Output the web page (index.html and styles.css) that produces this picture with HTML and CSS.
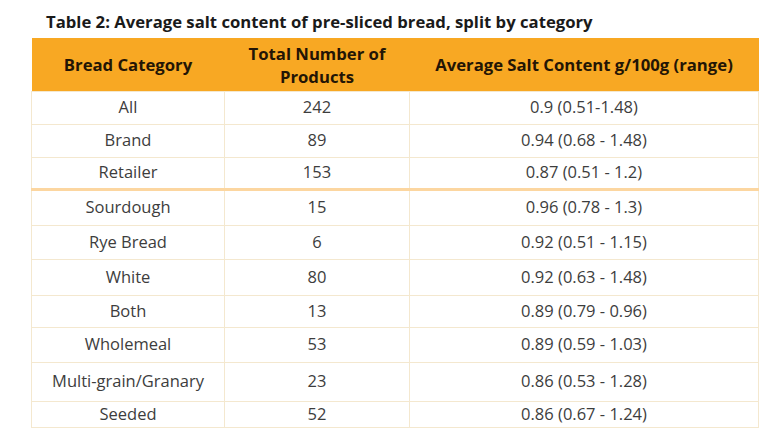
FILE: index.html
```html
<!DOCTYPE html>
<html>
<head>
<meta charset="utf-8">
<link rel="stylesheet" href="styles.css">
</head>
<body>
<div class="page">
  <h1 class="title">Table 2: Average salt content of pre-sliced bread, split by category</h1>
  <table class="salt">
    <colgroup>
      <col class="c1"><col class="c2"><col class="c3">
    </colgroup>
    <thead>
      <tr>
        <th>Bread Category</th>
        <th>Total Number of<br>Products</th>
        <th>Average Salt Content g/100g (range)</th>
      </tr>
    </thead>
    <tbody>
      <tr class="r1"><td>All</td><td>242</td><td>0.9 (0.51-1.48)</td></tr>
      <tr class="r2"><td>Brand</td><td>89</td><td>0.94 (0.68 - 1.48)</td></tr>
      <tr class="r3 split"><td>Retailer</td><td>153</td><td>0.87 (0.51 - 1.2)</td></tr>
      <tr class="r4"><td>Sourdough</td><td>15</td><td>0.96 (0.78 - 1.3)</td></tr>
      <tr class="r5"><td>Rye Bread</td><td>6</td><td>0.92 (0.51 - 1.15)</td></tr>
      <tr class="r6"><td>White</td><td>80</td><td>0.92 (0.63 - 1.48)</td></tr>
      <tr class="r7"><td>Both</td><td>13</td><td>0.89 (0.79 - 0.96)</td></tr>
      <tr class="r8"><td>Wholemeal</td><td>53</td><td>0.89 (0.59 - 1.03)</td></tr>
      <tr class="r9"><td>Multi-grain/Granary</td><td>23</td><td>0.86 (0.53 - 1.28)</td></tr>
      <tr class="r10"><td>Seeded</td><td>52</td><td>0.86 (0.67 - 1.24)</td></tr>
    </tbody>
  </table>
</div>
</body>
</html>
```
FILE: styles.css
```css
html, body {
  margin: 0;
  padding: 0;
  background: #ffffff;
}
.page {
  width: 780px;
  height: 438px;
  padding: 11px 0 0 31px;
  box-sizing: border-box;
  font-family: "Open Sans", "Noto Sans", sans-serif;
}
.title {
  margin: 0 0 5px 15px;
  font-size: 16.7px;
  font-weight: 700;
  line-height: 22px;
  color: #1a1a1a;
  letter-spacing: 0;
}
.salt {
  border-collapse: collapse;
  table-layout: fixed;
  width: 727px;
}
.c1 { width: 193px; }
.c2 { width: 185px; }
.c3 { width: 349px; }
.salt th {
  background: #f8a823;
  color: #231505;
  font-weight: 700;
  font-size: 16.7px;
  line-height: 23px;
  height: 53px;
  padding: 0;
  text-align: center;
  border: none;
}
.salt td {
  font-size: 16.5px;
  color: #3d3d3d;
  text-align: center;
  padding: 0 0 2px;
  line-height: 20px;
  border: 1px solid #f4e8cf;
}
.salt tr.split td {
  border-bottom: 3px solid #fcd6a0;
}
.r1 td { height: 30px; }
.r2 td { height: 30px; }
.r3 td { height: 28px; }
.r4 td { height: 32px; }
.r5 td { height: 31px; }
.r6 td { height: 33px; }
.r7 td { height: 29px; }
.r8 td { height: 32px; }
.r9 td { height: 36px; }
.r10 td { height: 23px; }
```
